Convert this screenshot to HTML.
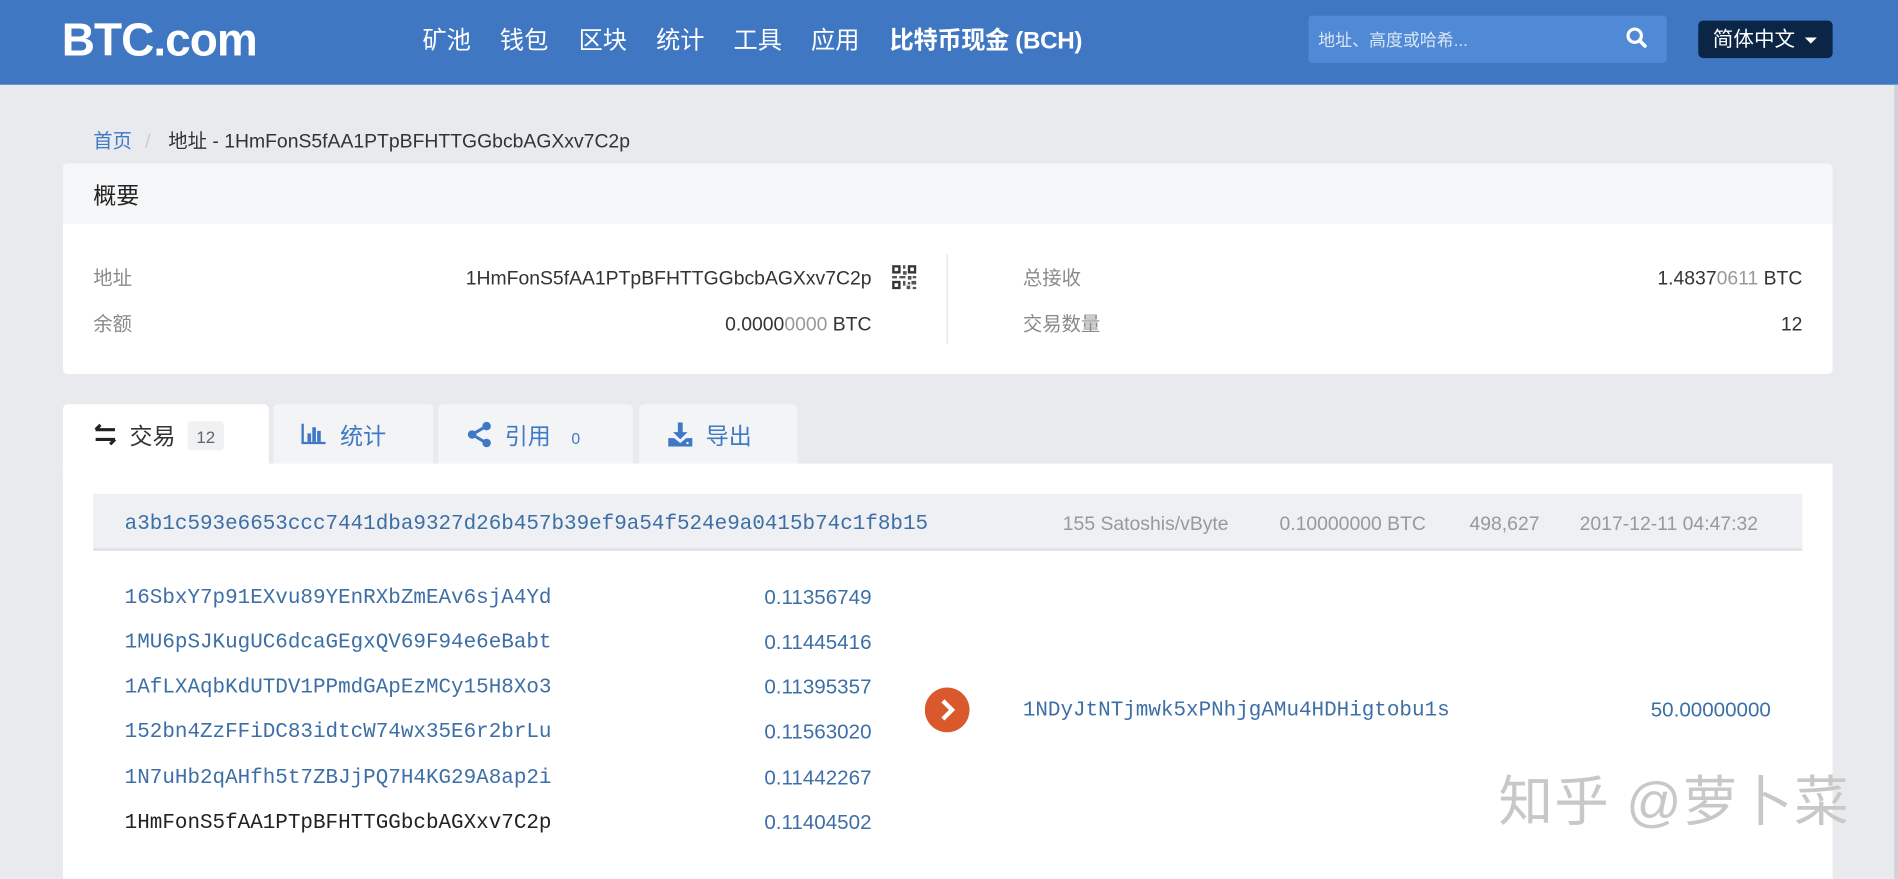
<!DOCTYPE html>
<html><head><meta charset="utf-8"><style>
*{margin:0;padding:0;box-sizing:border-box}
html,body{width:1898px;height:879px;overflow:hidden;background:#e8eaed}
#w{position:absolute;left:0;top:0;width:1568px;height:726px;transform:scale(1.21045);transform-origin:0 0;font-family:"Liberation Sans","Noto Sans CJK SC",sans-serif;background:#e8eaed}
.a{position:absolute;white-space:nowrap;line-height:22px}
.mono{font-family:"Liberation Mono","DejaVu Sans Mono",monospace}
.nav{color:#fff;font-size:20px;top:23px}
.g{color:#8a8a8a;font-size:16px}
.d{color:#333;font-size:16px}
.l{color:#3d6fa6;font-size:17.3px}
.r{text-align:right}
</style></head><body><div id="w">
<div class="a" style="left:0;top:0;width:1568px;height:70px;background:#3f77c3"></div>
<div class="a" style="left:1565px;top:70px;width:3px;height:656px;background:#d0d2d5"></div>
<div class="a" style="left:51px;top:19px;color:#fff;font-size:38px;line-height:30px;font-weight:bold;letter-spacing:-0.8px">BTC.com</div>
<div class="a nav" style="left:349px">矿池</div>
<div class="a nav" style="left:413px">钱包</div>
<div class="a nav" style="left:478px">区块</div>
<div class="a nav" style="left:542px">统计</div>
<div class="a nav" style="left:606px">工具</div>
<div class="a nav" style="left:670px">应用</div>
<div class="a nav" style="left:735px;font-weight:bold;letter-spacing:-0.3px">比特币现金 (BCH)</div>
<div class="a" style="left:1081px;top:13px;width:296px;height:39px;background:#5089d6;border-radius:3px"></div>
<div class="a" style="left:1089px;top:22px;color:#dbe6f5;font-size:14px">地址、高度或哈希...</div>
<svg class="a" style="left:1343px;top:22px" width="18" height="18" viewBox="0 0 18 18"><circle cx="7.5" cy="7.5" r="5.5" fill="none" stroke="#fff" stroke-width="2.6"/><path d="M11.5 11.5L16 16" stroke="#fff" stroke-width="3" stroke-linecap="round"/></svg>
<div class="a" style="left:1403px;top:17px;width:111px;height:31px;background:#0b2546;border-radius:4px"></div>
<div class="a" style="left:1415px;top:22px;color:#fff;font-size:17px">简体中文</div>
<div class="a" style="left:1491px;top:31px;width:0;height:0;border-left:5px solid transparent;border-right:5px solid transparent;border-top:5px solid #fff"></div>

<div class="a" style="left:77px;top:107px;font-size:16px;color:#3f78c4">首页</div>
<div class="a" style="left:120px;top:107px;font-size:16px;color:#ccc">/</div>
<div class="a d" style="left:139px;top:107px">地址 - 1HmFonS5fAA1PTpBFHTTGGbcbAGXxv7C2p</div>

<div class="a" style="left:52px;top:135px;width:1462px;height:174px;background:#fff;border-radius:4px;overflow:hidden"><div style="height:50px;background:#f5f6f7"></div></div>
<div class="a" style="left:77px;top:152px;font-size:19px;color:#222">概要</div>
<div class="a g" style="left:77px;top:220px">地址</div>
<div class="a d r" style="right:848px;top:220px">1HmFonS5fAA1PTpBFHTTGGbcbAGXxv7C2p</div>
<svg class="a" style="left:737px;top:219px" width="20" height="20" viewBox="0 0 20 20"><rect width="20" height="20" fill="#fff"/><path fill="#333" d="M0 0h7v7H0zM13 0h7v7h-7zM0 13h7v7H0z"/><path fill="#fff" d="M2 2h3v3H2zM15 2h3v3h-3zM2 15h3v3H2z"/><path fill="#555" d="M9 0h2v3H9zM9 5h3v3H9zM0 9h4v2H0zM6 9h5v2H6zM13 9h3v3h-3zM17 9h3v2h-3zM9 13h2v4H9zM13 14h2v2h-2zM16 13h4v3h-4zM12 17h3v3h-3zM17 18h3v2h-3z"/></svg>
<div class="a" style="left:782px;top:210px;width:1px;height:74px;background:#e3e3e3"></div>
<div class="a g" style="left:845px;top:220px">总接收</div>
<div class="a d r" style="right:79px;top:220px">1.4837<span style="color:#999">0611</span> BTC</div>
<div class="a g" style="left:77px;top:258px">余额</div>
<div class="a d r" style="right:848px;top:258px">0.0000<span style="color:#999">0000</span> BTC</div>
<div class="a g" style="left:845px;top:258px">交易数量</div>
<div class="a d r" style="right:79px;top:258px">12</div>

<div class="a" style="left:52px;top:334px;width:170px;height:60px;background:#fff;border-radius:4px 4px 0 0"></div>
<div class="a" style="left:226px;top:334px;width:132px;height:49px;background:#f3f4f6;border-radius:4px 4px 0 0"></div>
<div class="a" style="left:362px;top:334px;width:161px;height:49px;background:#f3f4f6;border-radius:4px 4px 0 0"></div>
<div class="a" style="left:528px;top:334px;width:131px;height:49px;background:#f3f4f6;border-radius:4px 4px 0 0"></div>
<div class="a" style="left:52px;top:383px;width:1462px;height:343px;background:#fff"></div>
<svg class="a" style="left:77px;top:350px" width="20" height="18" viewBox="0 0 20 18"><path d="M2 5h16M2 5l4-4M18 13H2M18 13l-4 4" stroke="#222" stroke-width="2.6" fill="none"/></svg>
<div class="a" style="left:107px;top:351px;font-size:19px;color:#333">交易</div>
<div class="a" style="left:155px;top:348px;width:30px;height:24px;background:#f0f1f3;border-radius:3px;font-size:14px;color:#666;text-align:center;line-height:26px">12</div>
<svg class="a" style="left:249px;top:350px" width="20" height="17" viewBox="0 0 20 17"><path d="M1 0v16h19" stroke="#3f78c4" stroke-width="2" fill="none"/><path fill="#3f78c4" d="M5 8h3v7H5zM9 3h3v12H9zM13 6h3v9h-3z"/></svg>
<div class="a" style="left:281px;top:351px;font-size:19px;color:#3f78c4">统计</div>
<svg class="a" style="left:385px;top:348px" width="22" height="22" viewBox="0 0 22 22"><path d="M17 4L5 11l12 7" stroke="#3f78c4" stroke-width="2.5" fill="none"/><circle cx="17" cy="4" r="3.5" fill="#3f78c4"/><circle cx="5" cy="11" r="3.5" fill="#3f78c4"/><circle cx="17" cy="18" r="3.5" fill="#3f78c4"/></svg>
<div class="a" style="left:417px;top:351px;font-size:19px;color:#3f78c4">引用</div>
<div class="a" style="left:472px;top:352px;font-size:13px;color:#3f78c4">0</div>
<svg class="a" style="left:552px;top:349px" width="20" height="20" viewBox="0 0 20 20"><path fill="#3f78c4" d="M8 0h4v8h4l-6 6-6-6h4zM0 13h5l5 4 5-4h5v7H0z"/><circle cx="16" cy="17" r="1" fill="#fff"/></svg>
<div class="a" style="left:583px;top:351px;font-size:19px;color:#3f78c4">导出</div>

<div class="a" style="left:77px;top:408px;width:1412px;height:47px;background:#eef0f3;border-bottom:2px solid #dfe1e4"></div>
<div class="a mono" style="left:103px;top:423px;font-size:17.3px;color:#3d6fa6">a3b1c593e6653ccc7441dba9327d26b457b39ef9a54f524e9a0415b74c1f8b15</div>
<div class="a" style="left:878px;top:423px;font-size:16px;color:#999">155 Satoshis/vByte</div>
<div class="a" style="left:1057px;top:423px;font-size:16px;color:#999">0.10000000 BTC</div>
<div class="a" style="left:1214px;top:423px;font-size:16px;color:#999">498,627</div>
<div class="a" style="left:1305px;top:423px;font-size:16px;color:#999">2017-12-11 04:47:32</div>

<div class="a mono l" style="left:103px;top:484px">16SbxY7p91EXvu89YEnRXbZmEAv6sjA4Yd</div>
<div class="a mono l" style="left:103px;top:521px">1MU6pSJKugUC6dcaGEgxQV69F94e6eBabt</div>
<div class="a mono l" style="left:103px;top:558px">1AfLXAqbKdUTDV1PPmdGApEzMCy15H8Xo3</div>
<div class="a mono l" style="left:103px;top:595px">152bn4ZzFFiDC83idtcW74wx35E6r2brLu</div>
<div class="a mono l" style="left:103px;top:633px">1N7uHb2qAHfh5t7ZBJjPQ7H4KG29A8ap2i</div>
<div class="a mono" style="left:103px;top:670px;font-size:17.3px;color:#222">1HmFonS5fAA1PTpBFHTTGGbcbAGXxv7C2p</div>
<div class="a l r" style="right:848px;top:483px;font-size:17px">0.11356749</div>
<div class="a l r" style="right:848px;top:520px;font-size:17px">0.11445416</div>
<div class="a l r" style="right:848px;top:557px;font-size:17px">0.11395357</div>
<div class="a l r" style="right:848px;top:594px;font-size:17px">0.11563020</div>
<div class="a l r" style="right:848px;top:632px;font-size:17px">0.11442267</div>
<div class="a l r" style="right:848px;top:669px;font-size:17px">0.11404502</div>
<svg class="a" style="left:764px;top:568px" width="37" height="37" viewBox="0 0 37 37"><circle cx="18.5" cy="18.5" r="18.5" fill="#d9582c"/><path d="M15 11l7.5 7.5L15 26" stroke="#fff" stroke-width="3.6" fill="none"/></svg>
<div class="a mono l" style="left:845px;top:577px">1NDyJtNTjmwk5xPNhjgAMu4HDHigtobu1s</div>
<div class="a l r" style="right:105px;top:576px;font-size:17px">50.00000000</div>
<div class="a" style="left:1238px;top:638px;font-size:45px;line-height:50px;color:#c8c8c8;letter-spacing:1px">知乎 @萝卜菜</div>
</div></body></html>
